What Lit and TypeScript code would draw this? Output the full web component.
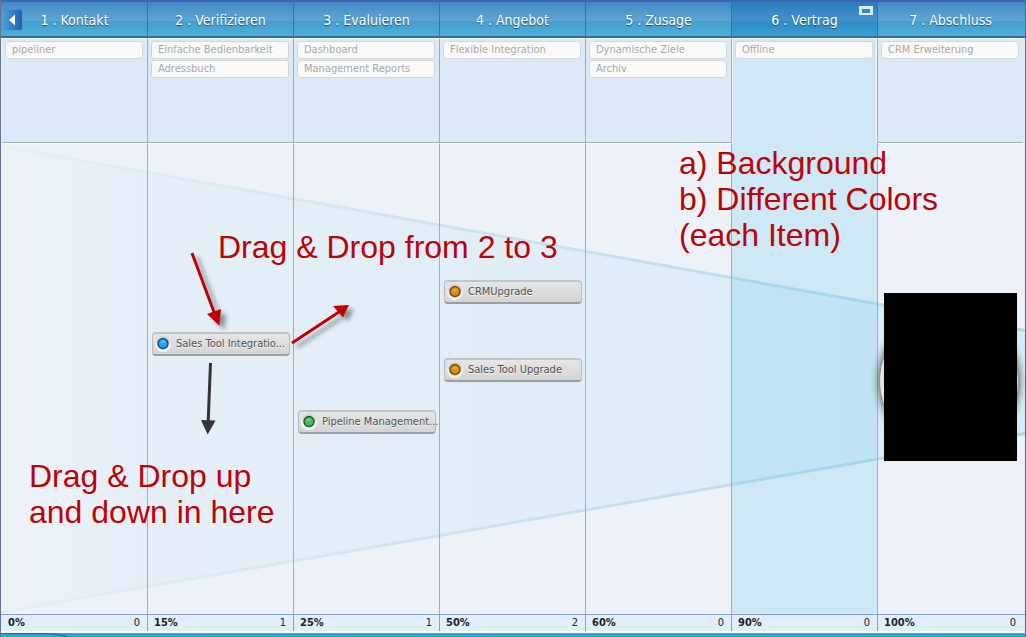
import { LitElement, html, css, svg, nothing } from "lit";
import { customElement, property } from "lit/decorators.js";

type Tone = "blue" | "green" | "amber";

interface Deal {
  label: string;
  tone: Tone;
  top: number;
}

interface Stage {
  title: string;
  archive: string[];
  deals: Deal[];
  percent: string;
  active?: boolean;
}

const STAGES: Stage[] = [
  { title: "Kontakt", archive: ["pipeliner"], deals: [], percent: "0%" },
  {
    title: "Verifizieren",
    archive: ["Einfache Bedienbarkeit", "Adressbuch"],
    deals: [{ label: "Sales Tool Integratio...", tone: "blue", top: 188 }],
    percent: "15%",
  },
  {
    title: "Evaluieren",
    archive: ["Dashboard", "Management Reports"],
    deals: [{ label: "Pipeline Management...", tone: "green", top: 266 }],
    percent: "25%",
  },
  {
    title: "Angebot",
    archive: ["Flexible Integration"],
    deals: [
      { label: "CRMUpgrade", tone: "amber", top: 136 },
      { label: "Sales Tool Upgrade", tone: "amber", top: 214 },
    ],
    percent: "50%",
  },
  { title: "Zusage", archive: ["Dynamische Ziele", "Archiv"], deals: [], percent: "60%" },
  { title: "Vertrag", archive: ["Offline"], deals: [], percent: "90%", active: true },
  { title: "Abschluss", archive: ["CRM Erweiterung"], deals: [], percent: "100%" },
];

@customElement("deal-card")
export class DealCard extends LitElement {
  @property() label = "";
  @property() tone: Tone = "blue";

  static styles = css`
    :host {
      display: block;
    }
    .card {
      display: flex;
      align-items: center;
      gap: 4px;
      width: 100%;
      height: 24px;
      box-sizing: border-box;
      margin: 0;
      padding: 0 0 0 1px;
      border: 1px solid #b9bbbd;
      border-top: 2px solid #bfc5ca;
      border-bottom: 2px solid #9c9fa2;
      border-radius: 4px;
      background: linear-gradient(#e6e6e6, #d3d4d5);
      color: #505050;
      font: 11px/18px Tahoma, "DejaVu Sans Condensed", "DejaVu Sans", sans-serif;
      text-align: left;
      white-space: nowrap;
      text-shadow: 0 1px 0 #f4f4f4;
    }
    .lamp {
      flex: none;
      width: 18px;
      height: 18px;
    }
  `;

  render() {
    const colours = {
      blue: ["#2ba3f2", "#0b4c8c"],
      green: ["#4cb85a", "#17602a"],
      amber: ["#d98e10", "#7a4a08"],
    }[this.tone];
    return html`<button class="card" type="button">
      <svg class="lamp" viewBox="0 0 18 18" aria-hidden="true">
        <circle cx="9" cy="9" r="8" fill="#f6f6f5" />
        <path d="M1.5 8a7.5 7.5 0 0 1 15 0" fill="#d5d5d4" />
        <circle cx="9" cy="9" r="6.5" fill="#e4e4e2" />
        <circle cx="9" cy="8.5" r="5" fill=${colours[0]} stroke=${colours[1]} stroke-width="1.5" />
        <ellipse cx="9" cy="7" rx="2.6" ry="1.6" fill="#fff" opacity=".22" />
      </svg>
      <span>${this.label}</span>
    </button>`;
  }
}

@customElement("app-root")
export class AppRoot extends LitElement {
  static styles = css`
    :host {
      display: flex;
      flex-direction: column;
      position: relative;
      box-sizing: border-box;
      min-height: 100vh;
      overflow: hidden;
      border-left: 1px solid #66728f;
      border-right: 1px solid #52678f;
      background: #edf2f9;
      font-family: Tahoma, "DejaVu Sans Condensed", "DejaVu Sans", sans-serif;
      font-size: 11px;
      color: #222;
    }
    .row {
      display: grid;
      grid-template-columns: repeat(7, minmax(0, 1fr));
      padding: 0 1px;
    }
    .heads {
      height: 38px;
      box-sizing: border-box;
      border-top: 2px solid #3c65aa;
      border-bottom: 2px solid #346d98;
      background: linear-gradient(#4088c8, #5fa6d4 54%, #469dcd 58%, #50afdb);
    }
    .head {
      position: relative;
      display: flex;
      align-items: center;
      justify-content: center;
      padding-top: 2px;
      border-right: 1px solid #38709f;
    }
    .head.active {
      background: linear-gradient(#2b7cbe, #4392c8 54%, #2e8bc3 58%, #399fd0);
    }
    .title {
      margin: 0;
      font-size: 14px;
      line-height: 18px;
      font-weight: 400;
      color: #fff;
      text-shadow: 0 1px 1px #1f4f7c;
      white-space: nowrap;
    }
    .back,
    .restore {
      position: absolute;
      margin: 0;
      padding: 0;
      border: 0;
      background: none;
    }
    .back {
      left: 0;
      top: 8px;
      width: 20px;
      height: 20px;
      border-radius: 0 2px 2px 0;
      background: linear-gradient(90deg, #4ba3db, #1f60ae);
      box-shadow: 0 0 1px #1f5d9c;
    }
    .restore {
      right: 4px;
      top: 4px;
      width: 14px;
      height: 9px;
      box-sizing: border-box;
      border: solid #dcedf8;
      border-width: 3px 3px 2px;
      background: #3a83c0;
    }
    .back svg {
      display: block;
    }
    .archives {
      height: 106px;
    }
    .archive {
      display: flex;
      flex-direction: column;
      gap: 1px;
      box-sizing: border-box;
      margin: 0;
      padding: 2px 4px 0 3px;
      list-style: none;
      border-top: 1px solid #f4fafd;
      border-right: 1px solid #98abc8;
      border-bottom: 1px solid #fff;
      background: #dceaf7;
      box-shadow: inset 0 -1px 0 #9eafc9;
    }
    .archive.active {
      background: #d0e8f5;
      border-bottom-color: #d0e8f5;
      box-shadow: inset 1px 0 0 #f4fafd, inset -1px 0 0 #f4fafd;
    }
    .entry {
      display: block;
      width: 100%;
      height: 18px;
      box-sizing: border-box;
      margin: 0;
      padding: 0 6px;
      border: 1px solid #d2d7db;
      border-radius: 3px;
      background: #f9f9f9;
      color: #a9a9a9;
      font: inherit;
      line-height: 16px;
      text-align: left;
      white-space: nowrap;
      overflow: hidden;
    }
    .board {
      position: relative;
      flex: 1;
      display: grid;
    }
    .funnel {
      position: absolute;
      inset: 0;
      width: 100%;
      height: 100%;
    }
    .lane {
      position: relative;
      border-right: 1px solid #9badc8;
    }
    .lane.active {
      background: rgba(92, 196, 235, 0.2);
    }
    .slot {
      position: absolute;
      left: 4px;
      right: 3px;
    }
    .totals {
      border-top: 1px solid #8b9fc5;
      background: #dff0fb;
    }
    .total {
      display: flex;
      justify-content: space-between;
      padding: 0 7px 0 6px;
      border-right: 1px solid #8b9fc5;
      line-height: 16px;
    }
    .row > :last-child {
      border-right-color: transparent;
    }
    .strip {
      height: 4px;
      border-top: 2px solid #fff;
      background: #2aa5de;
    }
    .strip svg {
      display: block;
    }
    .ink {
      position: absolute;
      left: 0;
      top: 0;
      pointer-events: none;
    }
    .note {
      position: absolute;
      margin: 0;
      font: 32px/36px "Liberation Sans", Arial, sans-serif;
      color: #b90408;
      white-space: nowrap;
    }
    .note.move {
      left: 217px;
      top: 229px;
    }
    .note.sort {
      left: 28px;
      top: 458px;
    }
    .note.looks {
      left: 678px;
      top: 145px;
    }
    .disc {
      position: absolute;
      left: 879px;
      top: 312px;
      width: 138px;
      height: 138px;
      border-radius: 50%;
      background: #e2e4e6;
      box-shadow: 0 0 9px 1px #3f454d;
    }
    .cover {
      position: absolute;
      left: 883px;
      top: 293px;
      width: 133px;
      height: 168px;
      background: #000;
    }
  `;

  private funnel() {
    return svg`<svg class="funnel" viewBox="0 0 1024 471" preserveAspectRatio="none" aria-hidden="true">
      <defs>
        <linearGradient id="body" x1="0" x2="1">
          <stop offset="0" stop-color="#edf2f8" />
          <stop offset=".12" stop-color="#e6eff7" />
          <stop offset=".5" stop-color="#e0edf7" />
          <stop offset="1" stop-color="#d8ebf7" />
        </linearGradient>
        <linearGradient id="edge" gradientUnits="userSpaceOnUse" x1="0" y1="0" x2="1024" y2="0">
          <stop offset="0" stop-color="#e6f0f6" />
          <stop offset=".4" stop-color="#cfe4f0" />
          <stop offset="1" stop-color="#aed8e9" />
        </linearGradient>
      </defs>
      <path d="M0 2 1024 187V290L0 469Z" fill="url(#body)" />
      <path d="M0 2 1024 187M0 469 1024 290" fill="none" stroke="url(#edge)" stroke-width="3" />
    </svg>`;
  }

  private arrows() {
    return svg`<svg class="ink" width="400" height="450" viewBox="1 0 400 450" aria-hidden="true">
      <defs>
        <filter id="soft" x="-30%" y="-30%" width="160%" height="160%">
          <feDropShadow dx="5" dy="4" stdDeviation="2" flood-color="#4a545e" flood-opacity=".6" />
        </filter>
      </defs>
      <g fill="#c00006" stroke="#c00006" filter="url(#soft)">
        <path d="M192 253 214 312" stroke-width="3" />
        <path d="M207 314 221 309 219.500 326Z" stroke="none" />
        <path d="M292 343 339 312" stroke-width="3" />
        <path d="M333 306 349 305 343 317.500Z" stroke="none" />
      </g>
      <path d="M210.500 363 208.200 421" stroke="#333538" stroke-width="3" />
      <path d="M201 420 215.500 420.500 207.700 434.500Z" fill="#333538" />
    </svg>`;
  }

  render() {
    return html`
      <header class="row heads">
        ${STAGES.map(
          (s, i) => html`<div class="head ${s.active ? "active" : ""}">
            ${i === 0
              ? html`<button class="back" type="button" aria-label="Back">
                  <svg width="20" height="20" viewBox="0 0 20 20">
                    <path d="M7 10 13 4.500V15.500Z" fill="#fff" />
                  </svg>
                </button>`
              : nothing}
            <h2 class="title">${i + 1} . ${s.title}</h2>
            ${s.active
              ? html`<button class="restore" type="button" aria-label="Restore"></button>`
              : nothing}
          </div>`
        )}
      </header>
      <section class="row archives">
        ${STAGES.map(
          (s) => html`<ul class="archive ${s.active ? "active" : ""}">
            ${s.archive.map((a) => html`<li><button class="entry" type="button">${a}</button></li>`)}
          </ul>`
        )}
      </section>
      <main class="board">
        ${this.funnel()}
        <div class="row">
          ${STAGES.map(
            (s) => html`<div class="lane ${s.active ? "active" : ""}">
              ${s.deals.map(
                (d) => html`<deal-card
                  class="slot"
                  style="top:${d.top}px"
                  .label=${d.label}
                  .tone=${d.tone}
                ></deal-card>`
              )}
            </div>`
          )}
        </div>
      </main>
      <footer>
        <div class="row totals">
          ${STAGES.map(
            (s) => html`<div class="total"><b>${s.percent}</b><span>${s.deals.length}</span></div>`
          )}
        </div>
        <div class="strip">
          <svg width="80" height="4" viewBox="0 0 80 4" aria-hidden="true">
            <path d="M0 .5H45Q58 1 66 4" fill="none" stroke="#14679c" />
          </svg>
        </div>
      </footer>
      <div class="disc"></div>
      <div class="cover"></div>
      ${this.arrows()}
      <p class="note move">Drag &amp; Drop from 2 to 3</p>
      <p class="note sort">Drag &amp; Drop up<br />and down in here</p>
      <p class="note looks">a) Background<br />b) Different Colors<br />(each Item)</p>
    `;
  }
}
